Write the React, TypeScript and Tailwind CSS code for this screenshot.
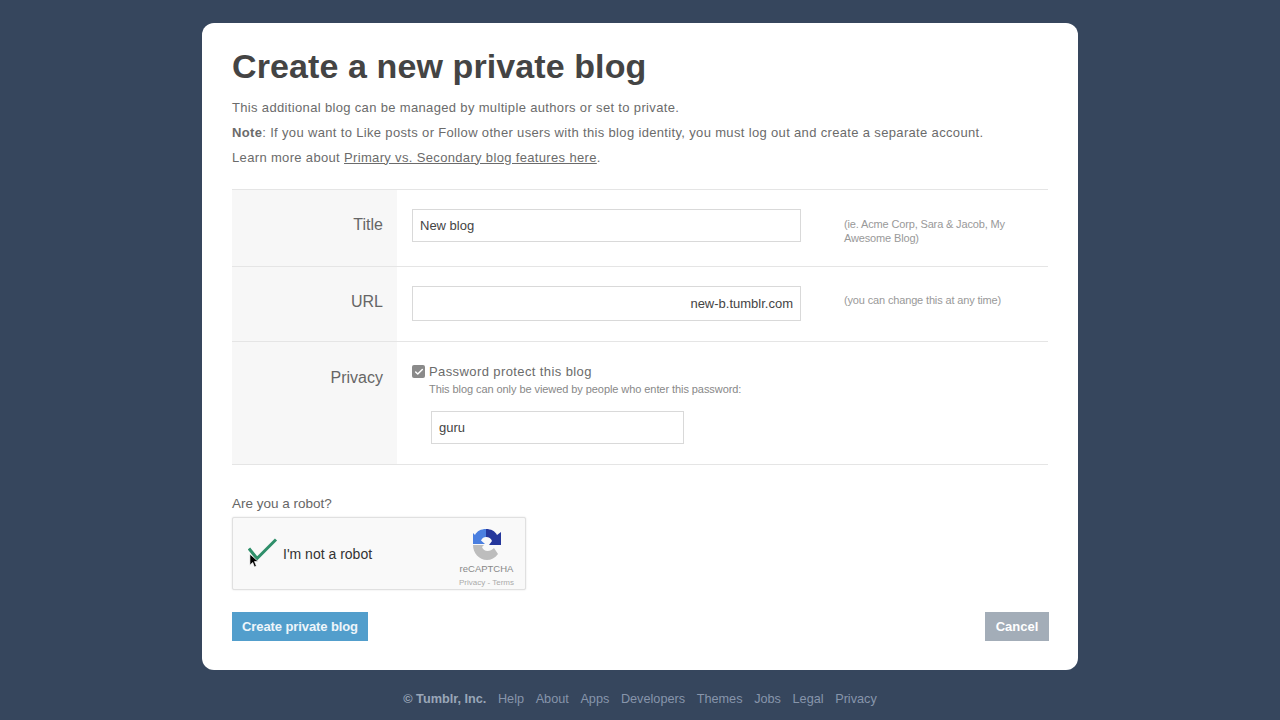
import { Check } from "lucide-react";

const footerLinks = ["Help", "About", "Apps", "Developers", "Themes", "Jobs", "Legal", "Privacy"];

function RecaptchaLogo() {
  return (
    <svg width="30" height="32" viewBox="0 0 30 32" className="block">
      <path d="M14 1C9 1 5 3 3 7L1 5V16H13L9 12.5C10 10 12 9 14 9z" fill="#4a7fe0" />
      <path d="M14 1C19 1 23 3 25 7L29 4V17H17L20 13C19 10.5 17 9 14 9z" fill="#25379c" />
      <path d="M1 17H12L10 19C11 21.5 13 23 15.5 23C18 23 20 22 22 20L26 26C23 30 19 32 15 32C7 32 1 25 1 17z" fill="#bdbdbd" />
    </svg>
  );
}

export default function App() {
  return (
    <div className="h-[720px] overflow-hidden bg-[#36465d] pt-[23px] font-['Liberation_Sans',Arial,sans-serif]">
      <div className="mx-auto h-[647px] w-[876px] rounded-[12px] bg-white px-[30px] pt-[20px]">
        <h1 className="text-[34px] leading-[46px] font-bold tracking-[0.1px] text-[#444]">Create a new private blog</h1>

        <div className="mt-[7px] text-[13px] leading-[24.5px] tracking-[0.34px] text-[#6b6b6b]">
          <p>This additional blog can be managed by multiple authors or set to private.</p>
          <p>
            <b>Note</b>: If you want to Like posts or Follow other users with this blog identity, you must log out and create a separate account.
          </p>
          <p className="pt-[0.5px]">
            Learn more about <a className="underline">Primary vs. Secondary blog features here</a>.
          </p>
        </div>

        <div className="mt-[18.5px] border-t border-[#e5e5e5]">
          <div className="flex h-[77px] border-b border-[#e5e5e5]">
            <div className="w-[165px] shrink-0 bg-[#f7f7f7] pt-[25px] pr-[14px] text-right text-[16px] leading-[20px] text-[#666]">Title</div>
            <div className="pt-[19px] pl-[15px]">
              <div className="flex h-[33px] w-[389px] items-center border border-[#d9d9d9] px-[7px] pt-[2px] text-[13px] text-[#444]">New blog</div>
            </div>
            <div className="box-content w-[190px] pt-[27px] pl-[43px] text-[11px] leading-[14.5px] tracking-[-0.15px] text-[#999]">(ie. Acme Corp, Sara &amp; Jacob, My Awesome Blog)</div>
          </div>

          <div className="flex h-[75px] border-b border-[#e5e5e5]">
            <div className="w-[165px] shrink-0 bg-[#f7f7f7] pt-[25px] pr-[14px] text-right text-[16px] leading-[20px] text-[#666]">URL</div>
            <div className="pt-[19px] pl-[15px]">
              <div className="flex h-[35px] w-[389px] items-center justify-end border border-[#d9d9d9] px-[7px] pt-[2px] text-[13px] text-[#444]">new-b.tumblr.com</div>
            </div>
            <div className="pt-[26px] pl-[43px] text-[11px] leading-[14.5px] tracking-[-0.15px] text-[#999]">(you can change this at any time)</div>
          </div>

          <div className="flex h-[123px] border-b border-[#e5e5e5]">
            <div className="w-[165px] shrink-0 bg-[#f7f7f7] pt-[26px] pr-[14px] text-right text-[16px] leading-[20px] text-[#666]">Privacy</div>
            <div className="pt-[22px] pl-[15px]">
              <div className="flex items-center gap-[4px]">
                <span className="flex h-[13px] w-[13px] items-center justify-center rounded-[2px] bg-[#8a8a8a]">
                  <Check size={10} strokeWidth={3.5} className="text-white" />
                </span>
                <span className="text-[13px] leading-[16px] tracking-[0.4px] text-[#6b6b6b]">Password protect this blog</span>
              </div>
              <p className="mt-[2px] pl-[17px] text-[11px] leading-[15px] tracking-[-0.07px] text-[#888]">This blog can only be viewed by people who enter this password:</p>
              <div className="mt-[14px] ml-[19px] flex h-[33px] w-[253px] items-center border border-[#d9d9d9] px-[7px] pt-[1px] text-[13px] text-[#444]">guru</div>
            </div>
          </div>
        </div>

        <p className="mt-[30px] text-[13.5px] leading-[18px] text-[#666]">Are you a robot?</p>

        <div className="mt-[4px] flex h-[73px] w-[294px] items-center rounded-[2px] border border-[#e0e0e0] bg-[#f9f9f9] shadow-[0_0_2px_rgba(0,0,0,0.12)]">
          <div className="relative ml-[15px] h-[30px] w-[30px]">
            <svg width="30" height="30" viewBox="0 0 30 30" className="absolute top-[-6px] left-0">
              <path d="M1 16.5l8 10L28 7.5" fill="none" stroke="#2f8f6a" strokeWidth="3" />
            </svg>
            <svg width="11" height="17" viewBox="0 0 12 18" className="absolute top-[15px] left-[1px]">
              <path d="M1 1v12l3-3 2 5 2-1-2-5h4z" fill="#000" stroke="#fff" strokeWidth="0.7" />
            </svg>
          </div>
          <span className="ml-[5px] pt-[2px] text-[14px] text-[#333]">I'm not a robot</span>
          <div className="mt-[10px] ml-auto flex w-[66px] flex-col items-center pr-[11px]">
            <RecaptchaLogo />
            <span className="mt-[3px] text-[9.5px] leading-[12px] text-[#888]">reCAPTCHA</span>
            <span className="mt-[3px] text-[8px] leading-[10px] text-[#aaa]">Privacy - Terms</span>
          </div>
        </div>

        <div className="mt-[22px] flex justify-between">
          <button className="h-[29px] w-[136px] bg-[#529ecc] pt-[2px] text-[13px] font-bold tracking-[-0.1px] text-white/90">Create private blog</button>
          <button className="mr-[-1px] h-[29px] w-[64px] bg-[#a3adb8] pt-[2px] text-[13px] font-bold text-white">Cancel</button>
        </div>
      </div>

      <div className="mt-[21px] flex justify-center gap-[11.6px] text-[12.7px] leading-[16px] text-[#8795ab]">
        <span className="font-bold text-[#9aa6b8]">© Tumblr, Inc.</span>
        {footerLinks.map((l) => (
          <a key={l}>{l}</a>
        ))}
      </div>
    </div>
  );
}
